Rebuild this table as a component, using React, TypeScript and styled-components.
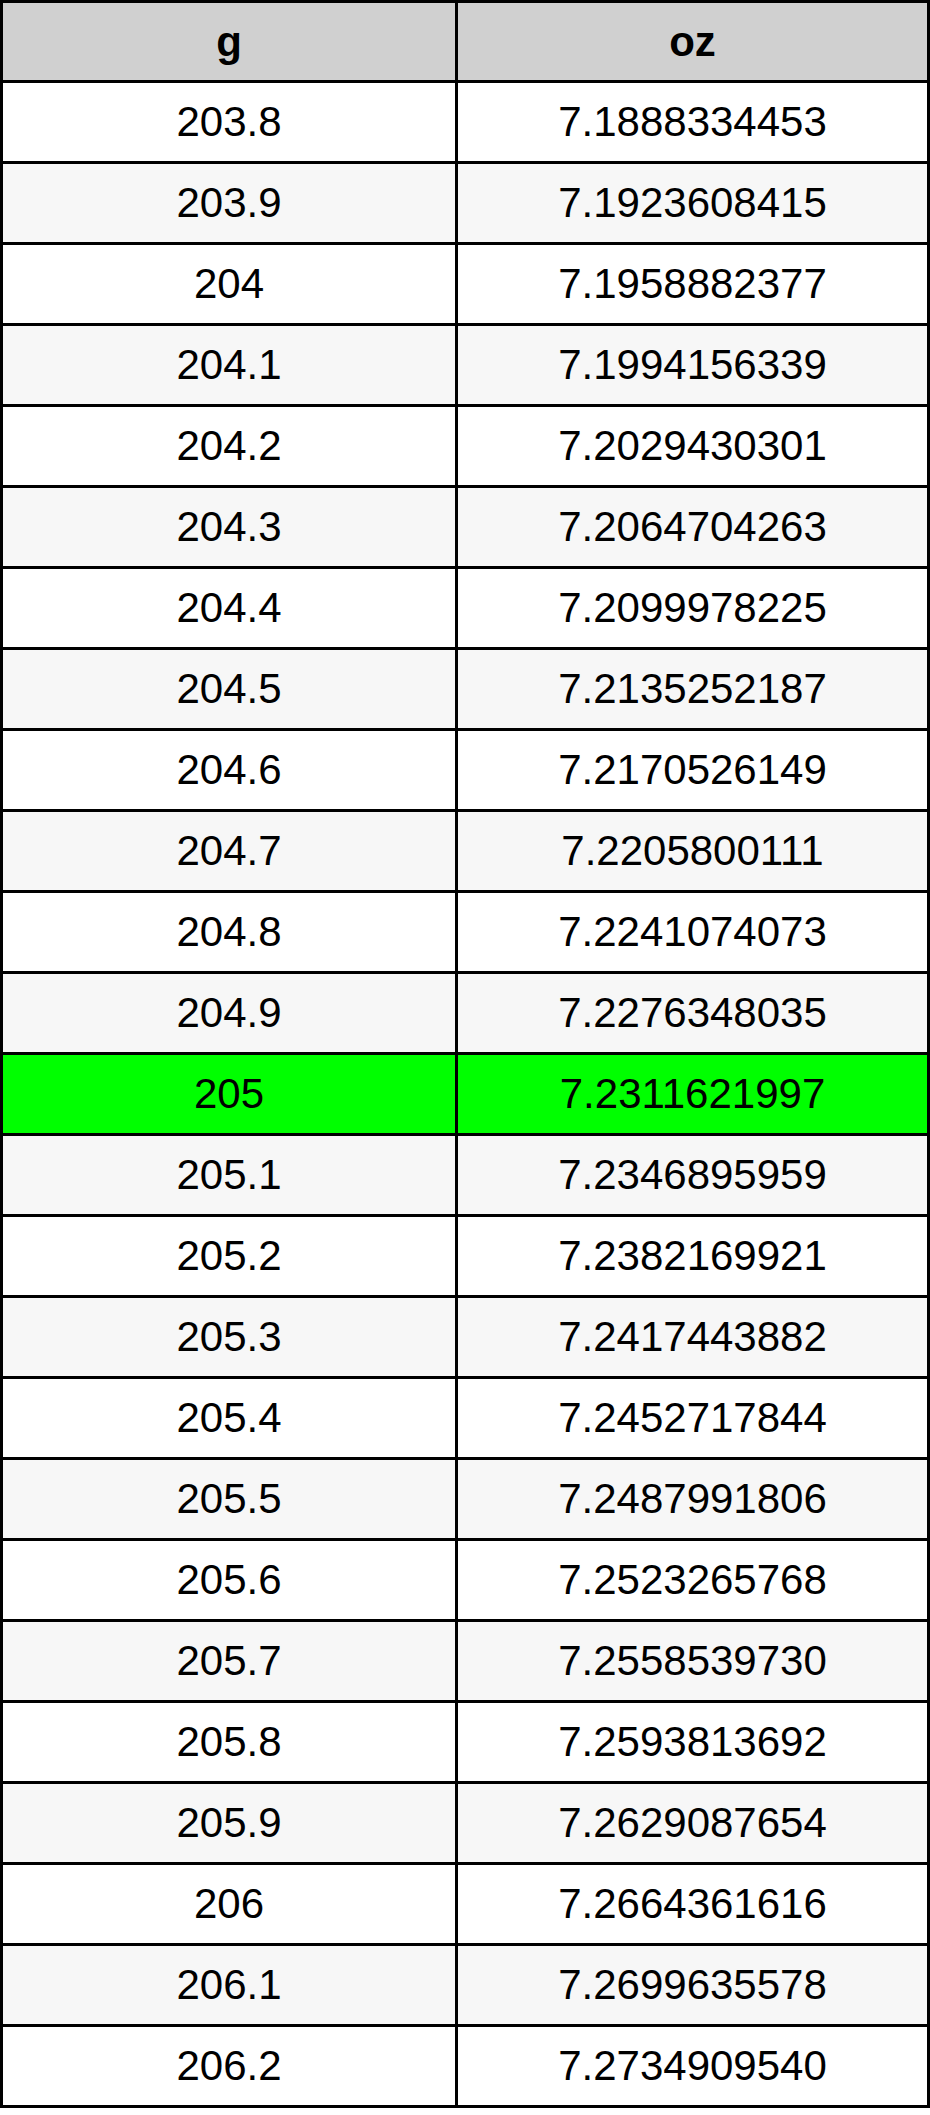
import styled, { createGlobalStyle } from "styled-components";

const GlobalStyle = createGlobalStyle`
  html, body {
    margin: 0;
    padding: 0;
    background: #ffffff;
  }
  body {
    font-family: "Liberation Sans", Arial, sans-serif;
  }
`;

// 변환표 전체
const Table = styled.table`
  width: 930px;
  border-collapse: collapse;
  table-layout: fixed;
  border: 3px solid #000;
`;

const HeadCell = styled.th`
  height: 77px;
  padding: 0;
  border: 3px solid #000;
  background: #d0d0d0;
  font-size: 42px;
  font-weight: bold;
  color: #000;
  text-align: center;
  vertical-align: middle;
`;

const Row = styled.tr<{ $alt: boolean; $active: boolean }>`
  background: ${(p) => (p.$active ? "#00ff00" : p.$alt ? "#f7f7f7" : "#ffffff")};
`;

const Cell = styled.td`
  height: 78px;
  padding: 0;
  border: 3px solid #000;
  font-size: 42px;
  color: #000;
  text-align: center;
  vertical-align: middle;
`;

const rows: [string, string][] = [
  ["203.8", "7.1888334453"],
  ["203.9", "7.1923608415"],
  ["204", "7.1958882377"],
  ["204.1", "7.1994156339"],
  ["204.2", "7.2029430301"],
  ["204.3", "7.2064704263"],
  ["204.4", "7.2099978225"],
  ["204.5", "7.2135252187"],
  ["204.6", "7.2170526149"],
  ["204.7", "7.2205800111"],
  ["204.8", "7.2241074073"],
  ["204.9", "7.2276348035"],
  ["205", "7.2311621997"],
  ["205.1", "7.2346895959"],
  ["205.2", "7.2382169921"],
  ["205.3", "7.2417443882"],
  ["205.4", "7.2452717844"],
  ["205.5", "7.2487991806"],
  ["205.6", "7.2523265768"],
  ["205.7", "7.2558539730"],
  ["205.8", "7.2593813692"],
  ["205.9", "7.2629087654"],
  ["206", "7.2664361616"],
  ["206.1", "7.2699635578"],
  ["206.2", "7.2734909540"],
];

export default function App() {
  return (
    <>
      <GlobalStyle />
      <Table>
        <colgroup>
          <col style={{ width: "455px" }} />
          <col />
        </colgroup>
        <thead>
          <tr>
            <HeadCell>g</HeadCell>
            <HeadCell>oz</HeadCell>
          </tr>
        </thead>
        <tbody>
          {rows.map(([g, oz], i) => (
            <Row key={g} $alt={i % 2 === 1} $active={g === "205"}>
              <Cell>{g}</Cell>
              <Cell>{oz}</Cell>
            </Row>
          ))}
        </tbody>
      </Table>
    </>
  );
}
